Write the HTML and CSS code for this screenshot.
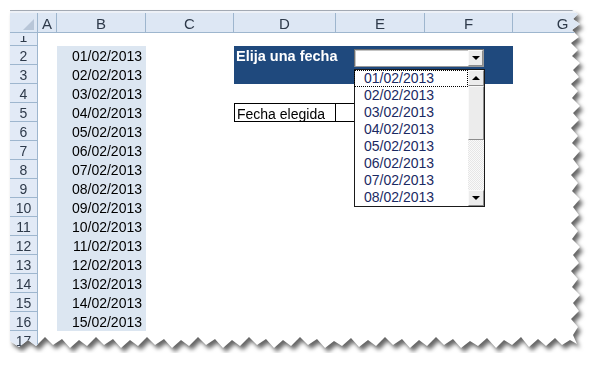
FILE: index.html
```html
<!DOCTYPE html>
<html lang="es">
<head>
    <meta charset="UTF-8">
    <title>Elija una fecha</title>
    <link rel="stylesheet" href="styles.css">
</head>
<body>
    <div class="paper">
        <div class="sheet">
            <div class="frame"></div>

            <div class="row hdr">
                <div class="corner"><span class="tri"></span></div>
                <div class="ch ca">A</div>
                <div class="ch cb">B</div>
                <div class="ch cc">C</div>
                <div class="ch cd">D</div>
                <div class="ch ce">E</div>
                <div class="ch cf">F</div>
                <div class="ch cg">G</div>
            </div>

            <div class="row r1"><div class="rh"><span class="stub">1</span></div></div>

            <div class="row">
                <div class="rh">2</div><div class="ca"></div><div class="cb date">01/02/2013</div><div class="cc"></div>
                <div class="cdf blue">Elija una fecha</div>
            </div>
            <div class="row">
                <div class="rh">3</div><div class="ca"></div><div class="cb date">02/02/2013</div><div class="cc"></div>
                <div class="cdf blue"></div>
            </div>
            <div class="row"><div class="rh">4</div><div class="ca"></div><div class="cb date">03/02/2013</div></div>
            <div class="row">
                <div class="rh">5</div><div class="ca"></div><div class="cb date">04/02/2013</div><div class="cc"></div>
                <div class="cd boxed">Fecha elegida</div><div class="ce boxed-r"></div>
            </div>
            <div class="row"><div class="rh">6</div><div class="ca"></div><div class="cb date">05/02/2013</div></div>
            <div class="row"><div class="rh">7</div><div class="ca"></div><div class="cb date">06/02/2013</div></div>
            <div class="row"><div class="rh">8</div><div class="ca"></div><div class="cb date">07/02/2013</div></div>
            <div class="row"><div class="rh">9</div><div class="ca"></div><div class="cb date">08/02/2013</div></div>
            <div class="row"><div class="rh">10</div><div class="ca"></div><div class="cb date">09/02/2013</div></div>
            <div class="row"><div class="rh">11</div><div class="ca"></div><div class="cb date">10/02/2013</div></div>
            <div class="row"><div class="rh">12</div><div class="ca"></div><div class="cb date">11/02/2013</div></div>
            <div class="row"><div class="rh">13</div><div class="ca"></div><div class="cb date">12/02/2013</div></div>
            <div class="row"><div class="rh">14</div><div class="ca"></div><div class="cb date">13/02/2013</div></div>
            <div class="row"><div class="rh">15</div><div class="ca"></div><div class="cb date">14/02/2013</div></div>
            <div class="row"><div class="rh">16</div><div class="ca"></div><div class="cb date">15/02/2013</div></div>
            <div class="row"><div class="rh">17</div></div>

            <!-- form controls floating over the sheet -->
            <div class="combo">
                <div class="combo-btn"><span class="arrow-down"></span></div>
            </div>

            <div class="listbox">
                <div class="items">
                    <div class="item focus">01/02/2013</div>
                    <div class="item">02/02/2013</div>
                    <div class="item">03/02/2013</div>
                    <div class="item">04/02/2013</div>
                    <div class="item">05/02/2013</div>
                    <div class="item">06/02/2013</div>
                    <div class="item">07/02/2013</div>
                    <div class="item">08/02/2013</div>
                </div>
                <div class="scrollbar">
                    <div class="sb-btn"><span class="arrow-up"></span></div>
                    <div class="sb-thumb"></div>
                    <div class="sb-track"></div>
                    <div class="sb-btn"><span class="arrow-down"></span></div>
                </div>
            </div>
        </div>
    </div>
</body>
</html>
```

FILE: styles.css
```css
body {
    margin: 0;
    background-color: #fff;
    font-family: "Liberation Sans", Arial, sans-serif;
    font-size: 14px;
    color: #000;
}
.paper {
    margin: 10px 0 0 10px;
    width: 575px;
    filter: drop-shadow(3px 4px 2px rgba(0, 0, 0, 0.6));
}
.sheet {
    position: relative;
    height: 342px;
    overflow: hidden;
    background-color: #fff;
    border-top: 1px solid #a3aab4;
    clip-path: polygon(0 0, 562px 0, 568px 4px, 563px 9px, 570px 14px, 562px 20px, 569px 27px, 561px 33px, 568px 40px, 562px 46px, 570px 53px, 563px 60px, 569px 67px, 561px 74px, 568px 81px, 562px 88px, 570px 96px, 563px 103px, 569px 110px, 561px 118px, 568px 126px, 562px 133px, 570px 141px, 563px 149px, 569px 157px, 561px 165px, 568px 173px, 562px 181px, 570px 189px, 563px 197px, 569px 205px, 561px 213px, 568px 221px, 562px 229px, 570px 237px, 563px 245px, 569px 253px, 561px 261px, 568px 269px, 562px 277px, 570px 285px, 563px 293px, 569px 301px, 561px 309px, 568px 317px, 563px 325px, 567px 334px, 560px 330px, 552px 335px, 545px 328px, 536px 336px, 528px 329px, 519px 337px, 511px 327px, 502px 335px, 494px 330px, 486px 338px, 477px 328px, 468px 336px, 460px 331px, 451px 338px, 443px 329px, 434px 335px, 426px 327px, 417px 336px, 409px 330px, 400px 338px, 392px 329px, 383px 335px, 375px 327px, 366px 336px, 358px 330px, 349px 337px, 341px 328px, 332px 336px, 324px 331px, 315px 338px, 307px 329px, 298px 335px, 290px 327px, 281px 336px, 273px 330px, 264px 338px, 256px 329px, 247px 335px, 239px 327px, 230px 336px, 222px 330px, 213px 338px, 205px 329px, 196px 335px, 188px 327px, 179px 336px, 171px 330px, 162px 338px, 154px 329px, 145px 335px, 137px 327px, 128px 336px, 120px 330px, 111px 338px, 103px 329px, 94px 335px, 86px 327px, 77px 336px, 69px 330px, 60px 338px, 52px 329px, 43px 335px, 35px 327px, 26px 336px, 18px 330px, 9px 337px, 0 331px);
}
.frame {
    height: 2px;
    background-color: #edf1f7;
}

/* grid rows */
.row {
    display: flex;
    height: 19px;
    line-height: 19px;
}
.row > div {
    flex: none;
    box-sizing: border-box;
    height: 19px;
    padding-top: 1px;
}
.ca { width: 19px; }
.cb { width: 89px; }
.cc { width: 88px; }
.cd { width: 102px; }
.ce { width: 89px; }
.cf { width: 88px; }
.cg { width: 100px; }
.cdf { width: 279px; }

/* column headers */
.hdr {
    height: 20px;
    line-height: 20px;
}
.hdr > div {
    height: 20px;
    background-color: #dde7f4;
    border-right: 1px solid #9eb6ce;
    border-bottom: 1px solid #9eb6ce;
    text-align: center;
    font-size: 15px;
    color: #2e3a4a;
}
.corner {
    position: relative;
    width: 28px;
}
.tri {
    position: absolute;
    right: 3px;
    bottom: 2px;
    width: 0;
    height: 0;
    border-left: 11px solid transparent;
    border-bottom: 11px solid #b8c6d8;
}

/* row headers */
.rh {
    width: 28px;
    background-color: #e2eaf6;
    border-right: 1px solid #9eb6ce;
    border-bottom: 1px solid #9eb6ce;
    text-align: center;
    color: #2e3a4a;
}
.r1 {
    height: 13px;
}
.row.r1 > .rh {
    height: 13px;
    padding-top: 3px;
}
.stub {
    display: block;
    height: 6px;
    line-height: 3px;
    overflow: hidden;
}

.date {
    background-color: #dce6f1;
    text-align: right;
    padding-right: 4px;
}
.blue {
    background-color: #1f497d;
    color: #fff;
    font-weight: bold;
    font-size: 14.5px;
    padding-left: 2px;
}
.boxed {
    border: 1px solid #000;
    padding-left: 2px;
}
.boxed-r {
    border-top: 1px solid #000;
    border-right: 1px solid #000;
    border-bottom: 1px solid #000;
}

/* combo box */
.combo {
    position: absolute;
    left: 344px;
    top: 38px;
    width: 130px;
    height: 18px;
    box-sizing: border-box;
    background-color: #fff;
    border: 1px solid #9a9a9a;
    border-top-color: #6e6e6e;
    border-left-color: #6e6e6e;
    box-shadow: inset 1px 1px 0 #c4c4c4;
}
.combo-btn {
    position: absolute;
    right: 0;
    top: 0;
    width: 15px;
    height: 16px;
    box-sizing: border-box;
    background-color: #ececec;
    border: 1px solid #fafafa;
    border-right-color: #8c8c8c;
    border-bottom-color: #8c8c8c;
    display: flex;
    align-items: center;
    justify-content: center;
}
.arrow-down,
.arrow-up {
    width: 0;
    height: 0;
    border-left: 4px solid transparent;
    border-right: 4px solid transparent;
}
.arrow-down { border-top: 4px solid #000; }
.arrow-up { border-bottom: 4px solid #000; }

/* list box */
.listbox {
    position: absolute;
    left: 344px;
    top: 58px;
    width: 131px;
    height: 138px;
    box-sizing: border-box;
    background-color: #fff;
    border: 1px solid #1a1a1a;
    display: flex;
}
.items {
    flex: 1;
}
.item {
    height: 17px;
    line-height: 17px;
    padding-left: 9px;
    color: #1b2a63;
    box-sizing: border-box;
}
.item.focus {
    outline: 1px dotted #000;
    outline-offset: -1px;
    margin-left: -1px;
    padding-left: 10px;
}
.scrollbar {
    width: 16px;
    display: flex;
    flex-direction: column;
}
.sb-btn {
    height: 16px;
    box-sizing: border-box;
    background-color: #ececec;
    border: 1px solid #fafafa;
    border-right-color: #8c8c8c;
    border-bottom-color: #8c8c8c;
    display: flex;
    align-items: center;
    justify-content: center;
}
.sb-thumb {
    height: 54px;
    box-sizing: border-box;
    background-color: #ececec;
    border: 1px solid #fafafa;
    border-right-color: #8c8c8c;
    border-bottom-color: #8c8c8c;
}
.sb-track {
    flex: 1;
    background: repeating-conic-gradient(#fafafa 0 25%, #e6e6e6 0 50%) 0 0 / 2px 2px;
}
```
